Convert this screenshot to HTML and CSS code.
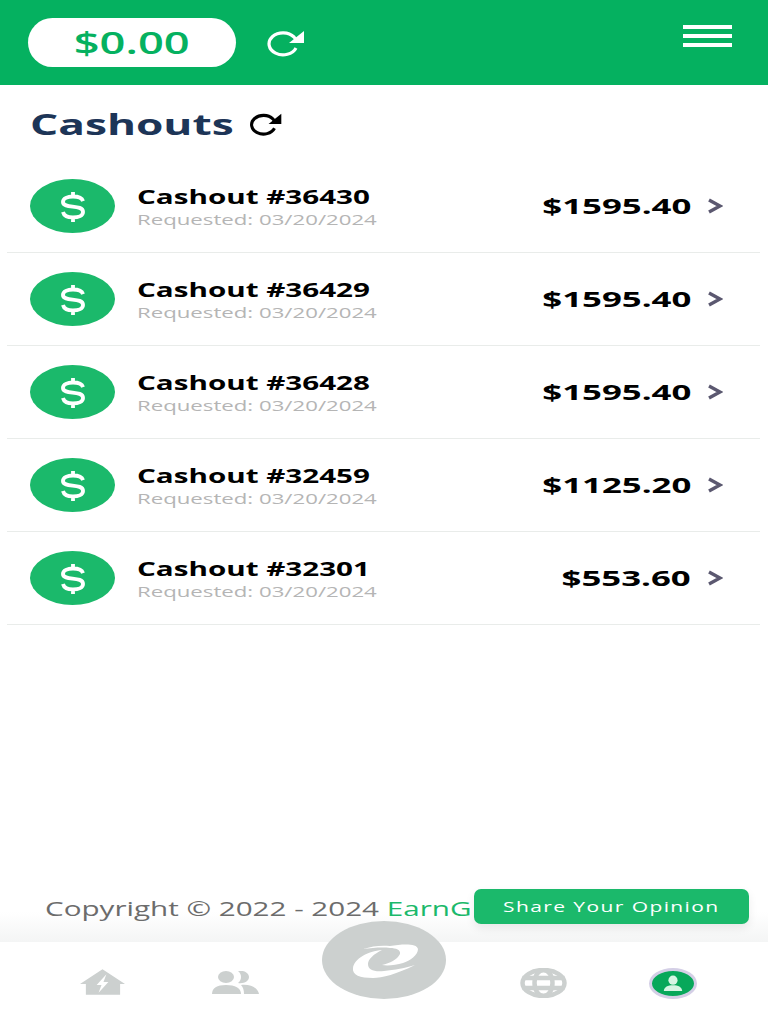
FILE: index.html
```html
<!DOCTYPE html>
<html lang="en">
<head>
<meta charset="utf-8">
<title>Cashouts</title>
<link rel="stylesheet" href="styles.css">
</head>
<body>
<div class="app">
  <header class="topbar">
    <div class="balance"><span>$0.00</span></div>
    <svg class="reload" viewBox="0 0 40 28"><path d="M30 19a14 11 0 1 1-2-11l4 5" fill="none" stroke="#fff" stroke-width="3.200"/><path d="M38 2v12H23z" fill="#fff"/></svg>
    <div class="burger"><i></i><i></i><i></i></div>
  </header>
  <main class="content">
    <h1 class="title"><span>Cashouts</span><svg class="reload-dark" viewBox="0 0 40 28"><path d="M30 19a14 11 0 1 1-2-11l4 5" fill="none" stroke="#000" stroke-width="3.600"/><path d="M38 2v12H23z" fill="#000"/></svg></h1>
    <ul class="list">
      <li class="row"><span class="coin"><svg viewBox="0 0 28 34"><path d="M25 11c-1-3-5-5-11-5S3 8 3 12c0 8 22 2 22 11 0 4-5 6-11 6S4 27 3 23M14 1v5M14 29v5" fill="none" stroke="#fff" stroke-width="4.200"/></svg></span><div class="info"><b>Cashout #36430</b><span>Requested: 03/20/2024</span></div><strong class="amt">$1595.40</strong><svg class="chev" viewBox="0 0 16 16"><path d="M2 2l11 6-11 6" fill="none" stroke="#5b5870" stroke-width="3.400"/></svg></li>
      <li class="row"><span class="coin"><svg viewBox="0 0 28 34"><path d="M25 11c-1-3-5-5-11-5S3 8 3 12c0 8 22 2 22 11 0 4-5 6-11 6S4 27 3 23M14 1v5M14 29v5" fill="none" stroke="#fff" stroke-width="4.200"/></svg></span><div class="info"><b>Cashout #36429</b><span>Requested: 03/20/2024</span></div><strong class="amt">$1595.40</strong><svg class="chev" viewBox="0 0 16 16"><path d="M2 2l11 6-11 6" fill="none" stroke="#5b5870" stroke-width="3.400"/></svg></li>
      <li class="row"><span class="coin"><svg viewBox="0 0 28 34"><path d="M25 11c-1-3-5-5-11-5S3 8 3 12c0 8 22 2 22 11 0 4-5 6-11 6S4 27 3 23M14 1v5M14 29v5" fill="none" stroke="#fff" stroke-width="4.200"/></svg></span><div class="info"><b>Cashout #36428</b><span>Requested: 03/20/2024</span></div><strong class="amt">$1595.40</strong><svg class="chev" viewBox="0 0 16 16"><path d="M2 2l11 6-11 6" fill="none" stroke="#5b5870" stroke-width="3.400"/></svg></li>
      <li class="row"><span class="coin"><svg viewBox="0 0 28 34"><path d="M25 11c-1-3-5-5-11-5S3 8 3 12c0 8 22 2 22 11 0 4-5 6-11 6S4 27 3 23M14 1v5M14 29v5" fill="none" stroke="#fff" stroke-width="4.200"/></svg></span><div class="info"><b>Cashout #32459</b><span>Requested: 03/20/2024</span></div><strong class="amt">$1125.20</strong><svg class="chev" viewBox="0 0 16 16"><path d="M2 2l11 6-11 6" fill="none" stroke="#5b5870" stroke-width="3.400"/></svg></li>
      <li class="row"><span class="coin"><svg viewBox="0 0 28 34"><path d="M25 11c-1-3-5-5-11-5S3 8 3 12c0 8 22 2 22 11 0 4-5 6-11 6S4 27 3 23M14 1v5M14 29v5" fill="none" stroke="#fff" stroke-width="4.200"/></svg></span><div class="info"><b>Cashout #32301</b><span>Requested: 03/20/2024</span></div><strong class="amt">$553.60</strong><svg class="chev" viewBox="0 0 16 16"><path d="M2 2l11 6-11 6" fill="none" stroke="#5b5870" stroke-width="3.400"/></svg></li>
    </ul>
  </main>
  <footer class="foot">
    <p class="copy"><span class="copy-text">Copyright © 2022 - 2024 <em>EarnG</em></span></p>
    <a class="opinion"><span>Share Your Opinion</span></a>
    <nav class="tabs">
      <svg class="tab" viewBox="0 0 46 26"><path d="M23 0L46 15h-5v11H6V15H0z" fill="#ccd0cf"/><path d="M27 5l-10 11h5l-3 8 10-11h-5z" fill="#fff"/></svg>
      <svg class="tab" viewBox="0 0 47 23"><ellipse cx="14" cy="6" rx="8" ry="6" fill="#ccd0cf"/><path d="M26 0c6-1 11 2 11 6s-5 7-11 6c4-3 4-9 0-12z" fill="#ccd0cf"/><path d="M0 23c0-6 5-9 14-9s15 3 15 9z" fill="#ccd0cf"/><path d="M32 23c0-4-1-7-3-9 10-1 17 3 18 9z" fill="#ccd0cf"/></svg>
      <div class="logo"><svg viewBox="0 0 124 78"><path d="M93 44C75 53 60 57 51 57 38 57 30 54 31 47 32 38 46 30 60 29 52 33 46 38 46 43 46 49 52 51 62 50 72 49 84 47 93 44z" fill="#fff"/><path d="M41 28C50 25 60 24 68 25 80 23 95 22 96 28 96 34 88 40 81 42 74 44 66 45 60 44 68 42 75 39 78 33 79 29 74 27 68 27 60 26 50 27 41 28z" fill="#fff"/></svg></div>
      <svg class="tab" viewBox="0 0 46 30"><ellipse cx="23" cy="15" rx="21" ry="13" fill="none" stroke="#ccd0cf" stroke-width="4.500"/><ellipse cx="23" cy="15" rx="9" ry="13" fill="none" stroke="#ccd0cf" stroke-width="4.500"/><path d="M2 10h42M2 20h42" stroke="#ccd0cf" stroke-width="4.500"/></svg>
      <div class="avatar"><svg viewBox="0 0 24 20"><ellipse cx="12" cy="6" rx="5.500" ry="5.500" fill="#d5f5e3"/><path d="M1 19c0-5 5-7 11-7s11 2 11 7z" fill="#d5f5e3"/></svg></div>
    </nav>
  </footer>
</div>
</body>
</html>
```
FILE: styles.css
```css
* { box-sizing: border-box; }
html, body { margin: 0; padding: 0; }
body { font-family: "Open Sans", "DejaVu Sans", sans-serif; background: #fff; }
.app { width: 768px; height: 1024px; display: flex; flex-direction: column; overflow: hidden; }
.topbar { height: 85px; background: #05b160; display: flex; align-items: center; padding: 0 36px 0 28px; flex: none; }
.balance { width: 208px; height: 49px; border-radius: 25px; background: #fff; color: #05b160; font-size: 31px; font-weight: 600; line-height: 48px; text-align: center; }
.balance span { display: inline-block; transform: scaleX(1.46); }
.reload { width: 40px; height: 28px; margin-left: 30px; }
.burger { margin-left: auto; margin-bottom: 14px; width: 49px; display: flex; flex-direction: column; gap: 5px; }
.burger i { display: block; height: 4px; background: #fff; }
.content { flex: 1; padding: 0 8px 0 7px; }
.title { margin: 18px 0 0 23px; height: 42px; font-size: 28px; line-height: 40px; font-weight: 700; color: #1d3557; display: flex; align-items: center; }
.title span { display: inline-block; transform: scaleX(1.58); transform-origin: left center; }
.reload-dark { width: 34px; height: 24px; margin-left: 90px; }
.list { list-style: none; margin: 15px 0 0; padding: 0; }
.row { height: 93px; border-bottom: 1px solid #e9ecea; display: flex; align-items: center; padding: 0 37px 0 23px; }
.coin { width: 85px; height: 54px; border-radius: 50%; background: #1bb96b; flex: none; display: flex; align-items: center; justify-content: center; }
.coin svg { width: 26px; height: 31px; }
.info { margin: 1px 0 0 22px; display: flex; flex-direction: column; flex: 1; }
.info b { font-size: 20px; line-height: 25px; color: #000; transform: scaleX(1.48); transform-origin: left center; white-space: nowrap; }
.info span { font-size: 15px; line-height: 20px; color: #b5b5b5; transform: scaleX(1.48); transform-origin: left center; white-space: nowrap; }
.amt { font-size: 22px; font-weight: 700; color: #000; margin-bottom: 2px; transform: scaleX(1.58); transform-origin: right center; }
.chev { width: 16px; height: 16px; margin-left: 16px; }
.foot { position: relative; height: 140px; flex: none; background: linear-gradient(#fff 28px, #f4f5f5 58px); }
.copy { margin: 0; padding: 10px 0 0 45px; font-size: 20px; line-height: 30px; color: #6c6c6c; white-space: nowrap; }
.copy-text { display: inline-block; transform: scaleX(1.48); transform-origin: left center; }
.copy em { font-style: normal; color: #1bb96b; }
.opinion { position: absolute; left: 474px; top: 5px; width: 275px; height: 35px; border-radius: 7px; background: #1bb96b; color: #fff; font-size: 15px; line-height: 34px; text-align: center; letter-spacing: 1px; box-shadow: 0 4px 10px rgba(0,0,0,.08); }
.opinion span { display: inline-block; transform: scaleX(1.4); }
.tabs { position: absolute; left: 0; right: 0; top: 58px; height: 82px; background: #fff; }
.tab { position: absolute; }
.tab:nth-child(1) { left: 80px; top: 27px; width: 45px; height: 26px; }
.tab:nth-child(2) { left: 212px; top: 29px; width: 47px; height: 23px; }
.tab:nth-child(4) { left: 520px; top: 26px; width: 47px; height: 30px; }
.logo { position: absolute; left: 322px; top: -21px; width: 124px; height: 78px; border-radius: 50%; background: #ccd0cf; }
.logo svg { display: block; width: 100%; height: 100%; }
.avatar { position: absolute; left: 649px; top: 26px; width: 48px; height: 31px; border-radius: 50%; background: #07a85a; border: 3px solid #d4cfe6; display: flex; align-items: center; justify-content: center; }
.avatar svg { width: 20px; height: 17px; }
```
